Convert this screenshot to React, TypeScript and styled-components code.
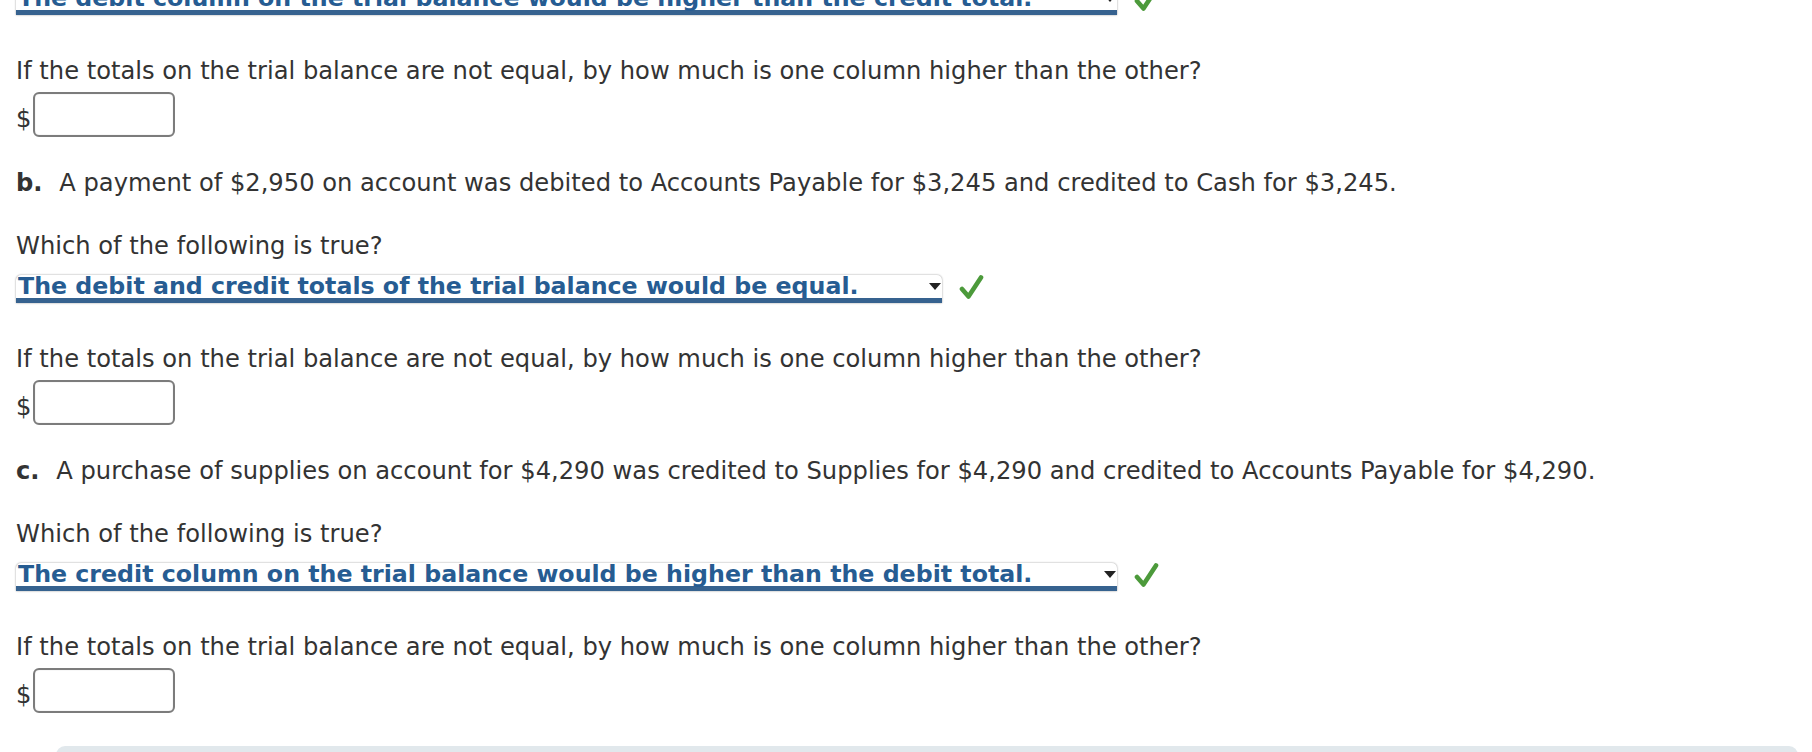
import React from 'react';
import styled, { createGlobalStyle } from 'styled-components';

const GlobalStyle = createGlobalStyle`
  html, body {
    margin: 0;
    padding: 0;
    background: #fff;
    overflow: hidden;
  }
  body {
    font-family: "DejaVu Sans", Verdana, sans-serif;
    color: #333;
  }
`;

const Page = styled.div`
  padding: 0 0 0 16px;
  font-size: 24.2px;
`;

const Line = styled.div`
  line-height: 28px;
  white-space: nowrap;
`;

const Statement = styled(Line)`
  margin-top: 32px;

  > b {
    margin-right: 9px;
  }
`;

const Prompt = styled(Line)`
  margin-top: 35px;
`;

const Question = styled(Line)`
  margin-top: 42px;
`;

const SelectRow = styled.div<{ $first?: boolean }>`
  display: flex;
  align-items: flex-start;
  margin-top: ${p => (p.$first ? '-13px' : '15px')};
`;

const SelectBox = styled.div<{ $width: number }>`
  box-sizing: border-box;
  width: ${p => p.$width}px;
  height: 28px;
  display: flex;
  align-items: flex-start;
  justify-content: space-between;
  background: #fff;
  border-radius: 5px 5px 0 0;
  border-bottom: 5px solid #36628f;
  box-shadow: 0 0 2px rgba(0, 0, 0, 0.45);
  padding: 0 1px 0 2px;
  font-size: 23.7px;
  font-weight: bold;
  line-height: 23px;
  color: #265c92;
  white-space: nowrap;
`;

const Arrow = styled.span`
  flex: none;
  margin-top: 8px;
  width: 0;
  height: 0;
  border-left: 6px solid transparent;
  border-right: 6px solid transparent;
  border-top: 7px solid #222;
`;

const Check = styled.svg`
  flex: none;
  margin-left: 17px;
  width: 25px;
  height: 25px;
`;

const AmountRow = styled.div`
  display: flex;
  align-items: flex-end;
  margin-top: 7px;
`;

const Dollar = styled.span`
  line-height: 28px;
  margin-bottom: 4px;
  margin-right: 2px;
`;

const AmountInput = styled.div`
  box-sizing: border-box;
  width: 142px;
  height: 45px;
  border: 2px solid #7c7c7c;
  border-radius: 6px;
  background: #fff;
  box-shadow: inset 0 0 1px rgba(0, 0, 0, 0.3);
`;

const Panel = styled.div`
  margin: 33px 14px 0 40px;
  height: 80px;
  background: #e1e8ec;
  border-radius: 9px 9px 0 0;
`;

const CheckMark = () => (
  <Check viewBox="0 0 25 25">
    <path d="M3 14 L9.5 21.5 L22 2.5" fill="none" stroke="#4c9a3b" strokeWidth="4.6" strokeLinejoin="round" strokeLinecap="round" />
  </Check>
);

const Dropdown = ({ text, width, first }: { text: string; width: number; first?: boolean }) => (
  <SelectRow $first={first}>
    <SelectBox $width={width}>
      <span>{text}</span>
      <Arrow />
    </SelectBox>
    <CheckMark />
  </SelectRow>
);

const Amount = () => (
  <>
    <Question>If the totals on the trial balance are not equal, by how much is one column higher than the other?</Question>
    <AmountRow>
      <Dollar>$</Dollar>
      <AmountInput />
    </AmountRow>
  </>
);

const parts = [
  {
    letter: 'b.',
    text: 'A payment of $2,950 on account was debited to Accounts Payable for $3,245 and credited to Cash for $3,245.',
    answer: 'The debit and credit totals of the trial balance would be equal.',
    width: 926,
  },
  {
    letter: 'c.',
    text: 'A purchase of supplies on account for $4,290 was credited to Supplies for $4,290 and credited to Accounts Payable for $4,290.',
    answer: 'The credit column on the trial balance would be higher than the debit total.',
    width: 1101,
  },
];

const App = () => {
  return (
    <Page>
      <GlobalStyle />
      <Dropdown first text="The debit column on the trial balance would be higher than the credit total." width={1101} />
      <Amount />

      {parts.map(p => (
        <React.Fragment key={p.letter}>
          <Statement>
            <b>{p.letter}</b> {p.text}
          </Statement>
          <Prompt>Which of the following is true?</Prompt>
          <Dropdown text={p.answer} width={p.width} />
          <Amount />
        </React.Fragment>
      ))}

      <Panel />
    </Page>
  );
};

export default App;
